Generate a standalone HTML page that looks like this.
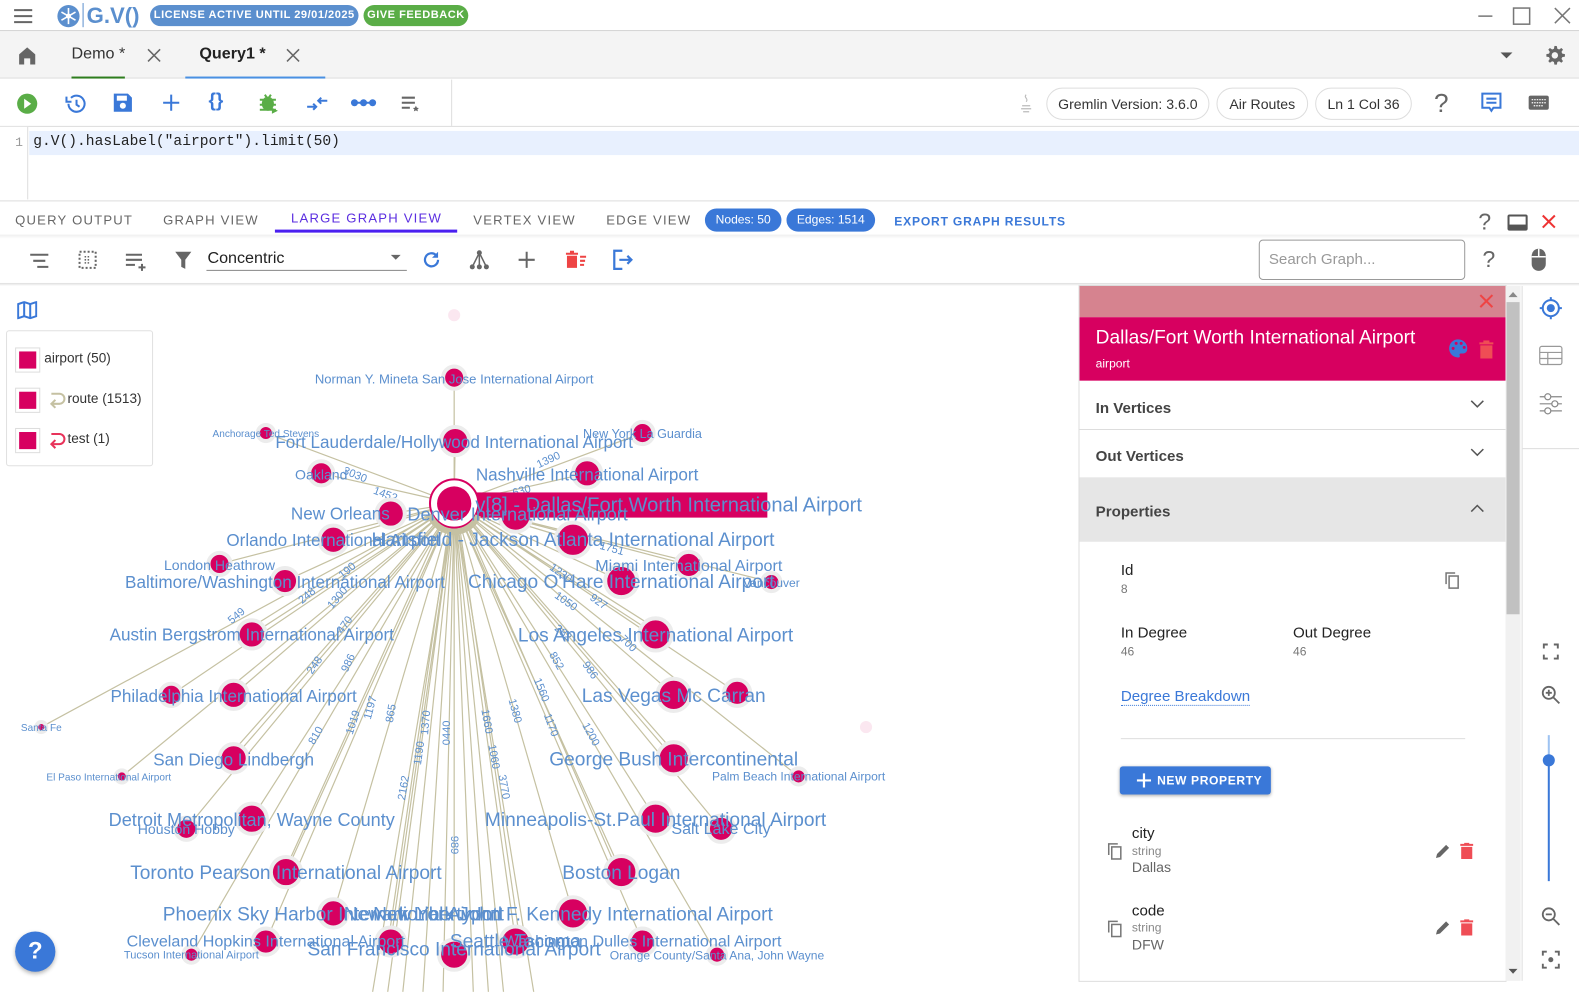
<!DOCTYPE html>
<html><head><meta charset="utf-8">
<style>
*{box-sizing:border-box;margin:0;padding:0}
body{width:1579px;height:985px;overflow:hidden;font-family:"Liberation Sans",sans-serif;background:#fff;position:relative;color:#333}
#w{position:absolute;left:0;top:0;width:1568px;height:978px;transform:scale(1.00702);transform-origin:0 0}
.abs{position:absolute}
.pill{position:absolute;border:1px solid #ddd;border-radius:16px;height:32px;top:87px;font-size:14px;line-height:30px;text-align:center;color:#333}
.tab{position:absolute;top:211px;font-size:13px;letter-spacing:1.2px;color:#666}
.ic{position:absolute}
</style></head><body><div id="w">
<!-- title bar -->
<div class="abs" style="left:0;top:0;width:1579px;height:31px;border-bottom:1px solid #ccc;background:#fff"></div>
<svg class="ic" style="left:12px;top:7px" width="22" height="18"><path d="M2 3h18M2 9h18M2 15h18" stroke="#666" stroke-width="2"/></svg>
<svg class="ic" style="left:56px;top:4px" width="24" height="24"><circle cx="12" cy="12" r="11" fill="#5b8fce"/><g stroke="#fff" stroke-width="1.6"><path d="M12 4v16M5 8l14 8M5 16l14-8"/></g><circle cx="12" cy="12" r="2.5" fill="#fff"/></svg>
<div class="abs" style="left:82px;top:3px;width:1px;height:24px;background:#5b8fce"></div>
<div class="abs" style="left:86px;top:3px;font-size:22px;font-weight:bold;color:#5b8fce">G.V()</div>
<div class="abs" style="left:149px;top:5px;width:207px;height:21px;border-radius:11px;background:#5b8fce;color:#fff;font-size:11px;font-weight:bold;letter-spacing:.5px;line-height:21px;text-align:center">LICENSE ACTIVE UNTIL 29/01/2025</div>
<div class="abs" style="left:361px;top:5px;width:104px;height:21px;border-radius:11px;background:#5aad47;color:#fff;font-size:11px;font-weight:bold;letter-spacing:.5px;line-height:21px;text-align:center">GIVE FEEDBACK</div>
<svg class="ic" style="left:1460px;top:5px" width="110" height="22"><path d="M8 11h14" stroke="#777" stroke-width="1.5"/><rect x="43" y="3" width="16" height="16" fill="none" stroke="#777" stroke-width="1.5"/><path d="M84 3l15 15M99 3l-15 15" stroke="#777" stroke-width="1.5"/></svg>
<!-- tabs bar -->
<div class="abs" style="left:0;top:31px;width:1579px;height:47px;background:#f4f4f4;border-bottom:1px solid #ddd"></div>
<svg class="ic" style="left:17px;top:45px" width="20" height="20"><path d="M2 9L10 2l8 7v10h-5v-6H7v6H2z" fill="#666"/></svg>
<div class="abs" style="left:71px;top:45px;font-size:16px;color:#333">Demo *</div>
<div class="abs" style="left:71px;top:76px;width:53px;height:2px;background:#2e7d1e"></div>
<svg class="ic" style="left:146px;top:48px" width="14" height="14"><path d="M1 1l12 12M13 1L1 13" stroke="#666" stroke-width="1.5"/></svg>
<div class="abs" style="left:198px;top:45px;font-size:16px;font-weight:bold;color:#222">Query1 *</div>
<div class="abs" style="left:184px;top:76px;width:139px;height:2px;background:#4a90e2"></div>
<svg class="ic" style="left:284px;top:48px" width="14" height="14"><path d="M1 1l12 12M13 1L1 13" stroke="#666" stroke-width="1.5"/></svg>
<svg class="ic" style="left:1490px;top:52px" width="12" height="8"><path d="M0 0h12L6 6z" fill="#555"/></svg>
<svg class="ic" style="left:1533px;top:44px" width="22" height="22"><path d="M11 1.5l2 .3.5 2.6 1.8.8 2.2-1.5 1.6 1.6-1.5 2.2.8 1.8 2.6.5v2.4l-2.6.5-.8 1.8 1.5 2.2-1.6 1.6-2.2-1.5-1.8.8-.5 2.6h-2.4l-.5-2.6-1.8-.8-2.2 1.5-1.6-1.6 1.5-2.2-.8-1.8-2.6-.5V9.8l2.6-.5.8-1.8-1.5-2.2 1.6-1.6 2.2 1.5 1.8-.8.5-2.6z" fill="#666"/><circle cx="11" cy="11" r="3.2" fill="#f4f4f4"/></svg>
<!-- toolbar -->
<div class="abs" style="left:0;top:125px;width:1579px;height:1px;background:#ddd"></div>
<div class="abs" style="left:448px;top:79px;width:1px;height:46px;background:#ddd"></div>
<svg class="ic" style="left:16px;top:92px" width="22" height="22"><circle cx="11" cy="11" r="10" fill="#5aad47"/><path d="M8 6l7 5-7 5z" fill="#fff"/></svg>
<svg class="ic" style="left:63px;top:91px" width="24" height="24"><path d="M5 12a8 8 0 1 0 2.5-5.8" fill="none" stroke="#3a78d8" stroke-width="2"/><path d="M3 5v5h5" fill="none" stroke="#3a78d8" stroke-width="2"/><path d="M13 8v5l3 2" fill="none" stroke="#3a78d8" stroke-width="2"/></svg>
<svg class="ic" style="left:112px;top:92px" width="20" height="20"><path d="M1 1h14l4 4v14H1z" fill="#3a78d8"/><rect x="4" y="3" width="10" height="5" fill="#fff"/><circle cx="10" cy="13" r="3" fill="#fff"/></svg>
<svg class="ic" style="left:160px;top:92px" width="20" height="20"><path d="M10 2v16M2 10h16" stroke="#3a78d8" stroke-width="2"/></svg>
<div class="abs" style="left:207px;top:90px;font-size:19px;color:#3a78d8;font-weight:bold">{}</div>
<svg class="ic" style="left:256px;top:92px" width="22" height="22"><ellipse cx="10" cy="11" rx="6" ry="7" fill="#5aad47"/><path d="M2 7h16M2 12h16M2 17h16M7 2l2 3M13 2l-2 3" stroke="#5aad47" stroke-width="2"/><path d="M14 15l6 3-6 3z" fill="#5aad47"/></svg>
<svg class="ic" style="left:304px;top:95px" width="22" height="16"><path d="M1 11h9M7 8l3 3-3 3M21 5h-9M15 2l-3 3 3 3" fill="none" stroke="#3a78d8" stroke-width="2"/></svg>
<svg class="ic" style="left:348px;top:96px" width="26" height="12"><path d="M3 6h20" stroke="#3a78d8" stroke-width="2"/><circle cx="4" cy="6" r="3.5" fill="#3a78d8"/><circle cx="13" cy="6" r="3.5" fill="#3a78d8"/><circle cx="22" cy="6" r="3.5" fill="#3a78d8"/></svg>
<svg class="ic" style="left:398px;top:95px" width="20" height="16"><path d="M1 2h13M1 7h13M1 12h8" stroke="#666" stroke-width="2"/><path d="M15 10l1 2 2 .2-1.5 1.4.5 2-2-1-2 1 .5-2-1.5-1.4 2-.2z" fill="#666"/></svg>
<svg class="ic" style="left:1011px;top:92px" width="16" height="22"><path d="M8 2c-3 3 3 4 0 7M4 13h8M3 16h10M5 19h6" stroke="#bbb" stroke-width="1.2" fill="none"/></svg>
<div class="pill" style="left:1039px;width:162px">Gremlin Version: 3.6.0</div>
<div class="pill" style="left:1208px;width:91px">Air Routes</div>
<div class="pill" style="left:1306px;width:96px">Ln 1 Col 36</div>
<div class="abs" style="left:1424px;top:87px;font-size:26px;color:#666">?</div>
<svg class="ic" style="left:1470px;top:91px" width="22" height="22"><path d="M2 2h18v14h-7l-2 3-2-3H2z" fill="none" stroke="#3a78d8" stroke-width="2"/><path d="M6 7h10M6 11h10" stroke="#3a78d8" stroke-width="2"/></svg>
<svg class="ic" style="left:1517px;top:94px" width="22" height="16"><rect x="1" y="1" width="20" height="14" rx="2" fill="#666"/><path d="M4 5h14M4 8h14M6 11h10" stroke="#fff" stroke-width="1.2" stroke-dasharray="1.5 1"/></svg>
<!-- editor -->
<div class="abs" style="left:0;top:126px;width:28px;height:72px;border-right:1px solid #ddd;background:#fff"></div>
<div class="abs" style="left:29px;top:130px;width:1540px;height:24px;background:#e8f0fe"></div>
<div class="abs" style="left:15px;top:134px;font-family:'Liberation Mono',monospace;font-size:13px;color:#999">1</div>
<div class="abs" style="left:33px;top:133px;font-family:'Liberation Mono',monospace;font-size:14.5px;color:#222">g.V().hasLabel("airport").limit(50)</div>
<div class="abs" style="left:0;top:199px;width:1579px;height:1px;background:#ddd"></div>
<!-- result tabs -->
<div class="tab" style="left:15px">QUERY OUTPUT</div>
<div class="tab" style="left:162px">GRAPH VIEW</div>
<div class="tab" style="left:289px;color:#5b2ee0;top:209px">LARGE GRAPH VIEW</div>
<div class="abs" style="left:273px;top:228px;width:181px;height:3px;background:#4a1ff0"></div>
<div class="tab" style="left:470px">VERTEX VIEW</div>
<div class="tab" style="left:602px">EDGE VIEW</div>
<div class="abs" style="left:700px;top:207px;width:76px;height:23px;border-radius:12px;background:#3a78d8;color:#fff;font-size:12px;line-height:23px;text-align:center">Nodes: 50</div>
<div class="abs" style="left:781px;top:207px;width:88px;height:23px;border-radius:12px;background:#3a78d8;color:#fff;font-size:12px;line-height:23px;text-align:center">Edges: 1514</div>
<div class="abs" style="left:888px;top:213px;font-size:12px;letter-spacing:.8px;color:#3a78d8;font-weight:bold">EXPORT GRAPH RESULTS</div>
<div class="abs" style="left:1468px;top:207px;font-size:23px;color:#666">?</div>
<svg class="ic" style="left:1496px;top:212px" width="22" height="18"><rect x="1" y="1" width="20" height="16" rx="2" fill="#555"/><rect x="3" y="3" width="16" height="8" fill="#fff"/></svg>
<svg class="ic" style="left:1530px;top:212px" width="16" height="16"><path d="M2 2l12 12M14 2L2 14" stroke="#e33" stroke-width="2"/></svg>
<div class="abs" style="left:0;top:233px;width:1579px;height:4px;background:linear-gradient(#eee,#fff)"></div>
<!-- graph toolbar -->
<svg class="ic" style="left:29px;top:250px" width="22" height="18"><path d="M1 3h18M4 9h12M8 15h11" stroke="#666" stroke-width="2"/></svg>
<svg class="ic" style="left:77px;top:248px" width="20" height="20"><rect x="2" y="2" width="16" height="16" fill="none" stroke="#666" stroke-width="2" stroke-dasharray="2 2"/><path d="M7 7h6M7 10h6M7 13h6" stroke="#666" stroke-width="1.5" stroke-dasharray="1.5 1.5"/></svg>
<svg class="ic" style="left:124px;top:250px" width="22" height="20"><path d="M1 3h16M1 8h16M1 13h9" stroke="#666" stroke-width="2"/><path d="M17 12v7M13.5 15.5h7" stroke="#666" stroke-width="2"/></svg>
<svg class="ic" style="left:173px;top:249px" width="18" height="20"><path d="M1 1h16l-6 8v9l-4-2V9z" fill="#666"/></svg>
<div class="abs" style="left:206px;top:248px;font-size:16px;color:#222">Concentric</div>
<div class="abs" style="left:205px;top:268px;width:199px;height:1px;background:#888"></div>
<svg class="ic" style="left:388px;top:253px" width="10" height="6"><path d="M0 0h10L5 5z" fill="#666"/></svg>
<svg class="ic" style="left:418px;top:247px" width="22" height="22"><path d="M17 11a6.5 6.5 0 1 1-2-4.7" fill="none" stroke="#3a78d8" stroke-width="2.2"/><path d="M17 3v6h-6z" fill="#3a78d8"/></svg>
<svg class="ic" style="left:465px;top:247px" width="22" height="22"><circle cx="11" cy="4" r="2.5" fill="#666"/><circle cx="4" cy="18" r="2.5" fill="#666"/><circle cx="11" cy="18" r="2.5" fill="#666"/><circle cx="18" cy="18" r="2.5" fill="#666"/><path d="M11 4L4 18M11 4v14M11 4l7 14" stroke="#666" stroke-width="1.5"/></svg>
<svg class="ic" style="left:513px;top:248px" width="20" height="20"><path d="M10 2v16M2 10h16" stroke="#666" stroke-width="2"/></svg>
<svg class="ic" style="left:560px;top:248px" width="24" height="20"><path d="M2 4h12M6 2h4" stroke="#e44" stroke-width="2"/><path d="M3 6h10v12H3z" fill="#e44"/><path d="M16 7h6M16 11h5M16 15h4" stroke="#e44" stroke-width="2"/></svg>
<svg class="ic" style="left:607px;top:247px" width="24" height="22"><path d="M11 2H3v18h8" fill="none" stroke="#3a78d8" stroke-width="2.2"/><path d="M8 11h12M16 7l4 4-4 4" fill="none" stroke="#3a78d8" stroke-width="2.2"/></svg>
<div class="abs" style="left:1250px;top:238px;width:205px;height:40px;border:1px solid #999;border-radius:4px;font-size:15px;color:#999;padding:10px 9px">Search Graph...</div>
<div class="abs" style="left:1472px;top:244px;font-size:23px;color:#666">?</div>
<svg class="ic" style="left:1519px;top:245px" width="18" height="26"><path d="M2 9a7 7 0 0 1 14 0v8a7 7 0 0 1-14 0z" fill="#666"/><path d="M2 10h14M9 2v8" stroke="#fff" stroke-width="1.5"/></svg>
<div class="abs" style="left:0;top:281px;width:1579px;height:3px;background:linear-gradient(#ddd,#fff)"></div>

<!-- graph -->
<svg class="abs" style="left:0;top:284px" width="1072" height="701" viewBox="0 284 1072 701">
<circle cx="451" cy="313" r="6" fill="#fbe7f0"/>
<circle cx="860" cy="722" r="6" fill="#fbe7f0"/>
<g stroke="#c5c1a2" stroke-width="1.2">
<path d="M451 500L451 375M451 500L264 430M451 500L452 438M451 500L638 430M451 500L319 470M451 500L583 470M451 500L388 510M451 500L512 512M451 500L331 536M451 500L569 536M451 500L218 560M451 500L684 561M451 500L283 577M451 500L617 577M451 500L766 578M451 500L250 630M451 500L651 630M451 500L170 690M451 500L232 690M451 500L669 690M451 500L732 688M451 500L41 722M451 500L232 753M451 500L669 753M451 500L121 771M451 500L793 771M451 500L250 813M451 500L185 823M451 500L651 813M451 500L716 823M451 500L284 866M451 500L617 866M451 500L331 907M451 500L569 907M451 500L388 935M451 500L264 935M451 500L512 935M451 500L638 935M451 500L451 948M451 500L190 948M451 500L712 948M451 500L370 985M451 500L385 985M451 500L420 985M451 500L440 985M451 500L470 985M451 500L500 985M451 500L530 985M451 500L400 985M451 500L485 985"/>
<path d="M446 500L243 627M456 500L656 627M448 500L284 862M454 500L612 862M449 500L386 932M453 500L516 932M445 505L228 750M457 505L672 750"/>
</g>
<g fill="#5b8fce" font-size="11">
<text x="340" y="470" transform="rotate(22 340 470)">3030</text><text x="370" y="490" transform="rotate(20 370 490)">1452</text>
<text x="535" y="465" transform="rotate(-25 535 465)">1390</text><text x="510" y="493" transform="rotate(-15 510 493)">630</text>
<text x="340" y="575" transform="rotate(-40 340 575)">190</text><text x="300" y="600" transform="rotate(-40 300 600)">248</text><text x="330" y="605" transform="rotate(-50 330 605)">1300</text>
<text x="230" y="620" transform="rotate(-40 230 620)">549</text><text x="340" y="630" transform="rotate(-55 340 630)">470</text>
<text x="310" y="670" transform="rotate(-55 310 670)">248</text><text x="345" y="668" transform="rotate(-65 345 668)">986</text>
<text x="312" y="740" transform="rotate(-60 312 740)">810</text><text x="350" y="730" transform="rotate(-72 350 730)">1019</text><text x="368" y="715" transform="rotate(-75 368 715)">1197</text>
<text x="390" y="718" transform="rotate(-80 390 718)">865</text><text x="418" y="760" transform="rotate(-82 418 760)">1190</text><text x="425" y="730" transform="rotate(-85 425 730)">1370</text>
<text x="447" y="740" transform="rotate(-90 447 740)">0440</text><text x="402" y="795" transform="rotate(-80 402 795)">2162</text><text x="448" y="830" transform="rotate(90 448 830)">989</text>
<text x="478" y="705" transform="rotate(80 478 705)">1660</text><text x="485" y="740" transform="rotate(80 485 740)">1060</text><text x="495" y="770" transform="rotate(80 495 770)">3770</text>
<text x="505" y="695" transform="rotate(75 505 695)">1380</text><text x="530" y="675" transform="rotate(68 530 675)">1560</text><text x="540" y="710" transform="rotate(70 540 710)">1170</text>
<text x="545" y="650" transform="rotate(60 545 650)">852</text><text x="578" y="660" transform="rotate(55 578 660)">986</text><text x="578" y="720" transform="rotate(62 578 720)">1200</text>
<text x="545" y="565" transform="rotate(35 545 565)">1230</text><text x="550" y="593" transform="rotate(35 550 593)">1050</text><text x="585" y="595" transform="rotate(35 585 595)">927</text>
<text x="550" y="625" transform="rotate(40 550 625)">282</text><text x="615" y="635" transform="rotate(45 615 635)">700</text><text x="595" y="545" transform="rotate(15 595 545)">1751</text>
</g>
<g fill="#d70060" stroke="#ececec" stroke-width="4">
<circle cx="451" cy="375" r="11"/><circle cx="264" cy="430" r="8"/><circle cx="452" cy="438" r="14"/><circle cx="638" cy="430" r="11"/>
<circle cx="319" cy="470" r="12"/><circle cx="583" cy="470" r="14"/><circle cx="388" cy="510" r="14"/><circle cx="512" cy="512" r="16"/>
<circle cx="331" cy="536" r="14"/><circle cx="569" cy="536" r="17"/><circle cx="218" cy="560" r="11"/><circle cx="684" cy="561" r="13"/>
<circle cx="283" cy="577" r="13"/><circle cx="617" cy="577" r="16"/><circle cx="766" cy="578" r="9"/><circle cx="250" cy="630" r="14"/>
<circle cx="651" cy="630" r="16"/><circle cx="170" cy="690" r="11"/><circle cx="232" cy="690" r="14"/><circle cx="669" cy="690" r="16"/>
<circle cx="732" cy="688" r="13"/><circle cx="41" cy="722" r="5"/><circle cx="232" cy="753" r="14"/><circle cx="669" cy="753" r="16"/>
<circle cx="121" cy="771" r="6"/><circle cx="793" cy="771" r="8"/><circle cx="250" cy="813" r="15"/><circle cx="185" cy="823" r="11"/>
<circle cx="651" cy="813" r="16"/><circle cx="716" cy="823" r="13"/><circle cx="284" cy="866" r="15"/><circle cx="617" cy="866" r="16"/>
<circle cx="331" cy="907" r="14"/><circle cx="569" cy="907" r="16"/><circle cx="388" cy="935" r="14"/><circle cx="264" cy="935" r="13"/>
<circle cx="512" cy="935" r="15"/><circle cx="638" cy="935" r="13"/><circle cx="451" cy="948" r="15"/><circle cx="190" cy="948" r="8"/><circle cx="712" cy="948" r="9"/>
</g>
<rect x="440" y="489" width="322" height="25" fill="#d70060"/>
<circle cx="451" cy="500" r="24" fill="#fff" stroke="#d70060" stroke-width="2"/>
<circle cx="451" cy="500" r="17" fill="#d70060"/>
<path d="M427 512a26 26 0 0 0 48 0" fill="none" stroke="#c5c1a2" stroke-width="6"/>
<g fill="#5b8fce" text-anchor="middle" font-family="Liberation Sans,sans-serif">
<text x="451" y="381" font-size="13">Norman Y. Mineta San Jose International Airport</text>
<text x="264" y="434" font-size="10">Anchorage Ted Stevens</text>
<text x="451" y="445" font-size="17">Fort Lauderdale/Hollywood International Airport</text>
<text x="638" y="435" font-size="12.5">New York La Guardia</text>
<text x="319" y="476" font-size="14">Oakland</text>
<text x="583" y="477" font-size="17">Nashville International Airport</text>
<text x="338" y="516" font-size="17">New Orleans</text>
<text x="514" y="517" font-size="18">Denver International Airport</text>
<text x="331" y="542" font-size="17">Orlando International Airport</text>
<text x="569" y="542" font-size="19">Hartsfield - Jackson Atlanta International Airport</text>
<text x="218" y="566" font-size="14">London Heathrow</text>
<text x="684" y="567" font-size="16">Miami International Airport</text>
<text x="283" y="584" font-size="17">Baltimore/Washington International Airport</text>
<text x="617" y="584" font-size="19">Chicago O'Hare International Airport</text>
<text x="766" y="583" font-size="12">Vancouver</text>
<text x="250" y="636" font-size="17">Austin Bergstrom International Airport</text>
<text x="651" y="637" font-size="19">Los Angeles International Airport</text>
<text x="232" y="697" font-size="17">Philadelphia International Airport</text>
<text x="669" y="697" font-size="19">Las Vegas Mc Carran</text>
<text x="41" y="726" font-size="10">Santa Fe</text>
<text x="232" y="760" font-size="17">San Diego Lindbergh</text>
<text x="669" y="760" font-size="19">George Bush Intercontinental</text>
<text x="108" y="775" font-size="10">El Paso International Airport</text>
<text x="793" y="775" font-size="12">Palm Beach International Airport</text>
<text x="250" y="820" font-size="18">Detroit Metropolitan, Wayne County</text>
<text x="185" y="828" font-size="14">Houston Hobby</text>
<text x="651" y="820" font-size="19">Minneapolis-St.Paul International Airport</text>
<text x="716" y="828" font-size="16">Salt Lake City</text>
<text x="284" y="873" font-size="19">Toronto Pearson International Airport</text>
<text x="617" y="873" font-size="19">Boston Logan</text>
<text x="331" y="914" font-size="19">Phoenix Sky Harbor International Airport</text>
<text x="569" y="914" font-size="19">New York John F. Kennedy International Airport</text>
<text x="420" y="914" font-size="19">Newark Liberty Intl</text>
<text x="264" y="940" font-size="16">Cleveland Hopkins International Airport</text>
<text x="512" y="941" font-size="19">Seattle Tacoma</text>
<text x="638" y="940" font-size="16">Washington Dulles International Airport</text>
<text x="451" y="949" font-size="19">San Francisco International Airport</text>
<text x="190" y="952" font-size="11">Tucson International Airport</text>
<text x="712" y="953" font-size="12">Orange County/Santa Ana, John Wayne</text>
</g>
<text x="472" y="508" font-size="20" fill="#5b8fce">v[8] - Dallas/Fort Worth International Airport</text>
</svg>

<!-- legend -->
<svg class="ic" style="left:17px;top:299px" width="20" height="18"><path d="M1 3l6-2 6 2 6-2v14l-6 2-6-2-6 2z" fill="none" stroke="#3a78d8" stroke-width="2"/><path d="M7 1v14M13 3v14" stroke="#3a78d8" stroke-width="2"/></svg>
<div class="abs" style="left:6px;top:328px;width:146px;height:135px;border:1px solid #e0e0e0;border-radius:3px;background:#fff;font-size:13.5px;color:#333">
 <div class="abs" style="left:8px;top:16px;width:25px;height:25px;border:1px solid #ddd;padding:3px"><div style="width:17px;height:17px;background:#d70060"></div></div>
 <div class="abs" style="left:37px;top:19px">airport (50)</div>
 <div class="abs" style="left:8px;top:56px;width:25px;height:25px;border:1px solid #ddd;padding:3px"><div style="width:17px;height:17px;background:#d70060"></div></div>
 <svg class="abs" style="left:40px;top:58px" width="20" height="20"><path d="M4 4h8a5 5 0 0 1 0 10H5M8 10l-4 4 4 4" fill="none" stroke="#c5c1a2" stroke-width="2"/></svg>
 <div class="abs" style="left:60px;top:59px">route (1513)</div>
 <div class="abs" style="left:8px;top:96px;width:25px;height:25px;border:1px solid #ddd;padding:3px"><div style="width:17px;height:17px;background:#d70060"></div></div>
 <svg class="abs" style="left:40px;top:98px" width="20" height="20"><path d="M4 4h8a5 5 0 0 1 0 10H5M8 10l-4 4 4 4" fill="none" stroke="#e8335a" stroke-width="2"/></svg>
 <div class="abs" style="left:60px;top:99px">test (1)</div>
</div>
<!-- help -->
<div class="abs" style="left:15px;top:925px;width:40px;height:40px;border-radius:50%;background:#3a78d8;color:#fff;font-size:24px;font-weight:bold;text-align:center;line-height:40px;box-shadow:0 2px 4px rgba(0,0,0,.3)">?</div>

<!-- right panel -->
<div class="abs" style="left:1071px;top:283px;width:425px;height:692px;border:1px solid #ddd;background:#fff"></div>
<div class="abs" style="left:1072px;top:284px;width:423px;height:31px;background:#d6838f"></div>
<svg class="ic" style="left:1469px;top:292px" width="14" height="14"><path d="M1 1l12 12M13 1L1 13" stroke="#e44" stroke-width="2"/></svg>
<div class="abs" style="left:1072px;top:315px;width:423px;height:63px;background:#d70060"></div>
<div class="abs" style="left:1088px;top:325px;font-size:19px;color:#fff">Dallas/Fort Worth International Airport</div>
<div class="abs" style="left:1088px;top:354px;font-size:12px;color:#fff">airport</div>
<svg class="ic" style="left:1438px;top:336px" width="20" height="20"><path d="M10 1a9 9 0 0 0 0 18c1.5 0 2-1 1.5-2s0-2 1.5-2h2a4 4 0 0 0 4-4A9 9 0 0 0 10 1z" fill="#3a78d8"/><circle cx="5" cy="10" r="1.5" fill="#d70060"/><circle cx="8" cy="5" r="1.5" fill="#d70060"/><circle cx="13" cy="5" r="1.5" fill="#d70060"/><circle cx="16" cy="9" r="1.5" fill="#d70060"/></svg>
<svg class="ic" style="left:1469px;top:338px" width="14" height="18"><path d="M0 3h14M4 1h6" stroke="#ef4d55" stroke-width="2"/><path d="M1 5h12v13H1z" fill="#ef4d55"/></svg>
<div class="abs" style="left:1088px;top:397px;font-size:15px;font-weight:bold;color:#444">In Vertices</div>
<svg class="ic" style="left:1460px;top:397px" width="14" height="9"><path d="M1 1l6 6 6-6" fill="none" stroke="#555" stroke-width="1.5"/></svg>
<div class="abs" style="left:1072px;top:426px;width:423px;height:1px;background:#ddd"></div>
<div class="abs" style="left:1088px;top:445px;font-size:15px;font-weight:bold;color:#444">Out Vertices</div>
<svg class="ic" style="left:1460px;top:445px" width="14" height="9"><path d="M1 1l6 6 6-6" fill="none" stroke="#555" stroke-width="1.5"/></svg>
<div class="abs" style="left:1072px;top:474px;width:423px;height:64px;background:#e6e6e6"></div>
<div class="abs" style="left:1088px;top:500px;font-size:15px;font-weight:bold;color:#444">Properties</div>
<svg class="ic" style="left:1460px;top:500px" width="14" height="9"><path d="M1 8l6-6 6 6" fill="none" stroke="#555" stroke-width="1.5"/></svg>
<div class="abs" style="left:1113px;top:558px;font-size:15px;color:#222">Id</div>
<div class="abs" style="left:1113px;top:578px;font-size:12px;color:#777">8</div>
<svg class="ic" style="left:1432px;top:567px" width="18" height="18"><path d="M4 13V2h9" fill="none" stroke="#777" stroke-width="1.5"/><rect x="7" y="5" width="9" height="12" fill="none" stroke="#777" stroke-width="1.5"/></svg>
<div class="abs" style="left:1113px;top:620px;font-size:15px;color:#222">In Degree</div>
<div class="abs" style="left:1113px;top:640px;font-size:12px;color:#777">46</div>
<div class="abs" style="left:1284px;top:620px;font-size:15px;color:#222">Out Degree</div>
<div class="abs" style="left:1284px;top:640px;font-size:12px;color:#777">46</div>
<div class="abs" style="left:1113px;top:683px;font-size:15px;color:#3a78d8;border-bottom:1px dotted #3a78d8;line-height:17px">Degree Breakdown</div>
<div class="abs" style="left:1113px;top:733px;width:342px;height:1px;background:#ddd"></div>
<div class="abs" style="left:1112px;top:761px;width:150px;height:28px;border-radius:3px;background:#3a78d8;color:#fff;font-size:12px;font-weight:bold;letter-spacing:.6px;line-height:28px;padding-left:37px;box-shadow:0 1px 3px rgba(0,0,0,.3)">NEW PROPERTY</div>
<svg class="ic" style="left:1128px;top:767px" width="16" height="16"><path d="M8 1v14M1 8h14" stroke="#fff" stroke-width="2.2"/></svg>
<svg class="ic" style="left:1097px;top:836px" width="18" height="18"><path d="M4 13V2h9" fill="none" stroke="#777" stroke-width="1.5"/><rect x="7" y="5" width="9" height="12" fill="none" stroke="#777" stroke-width="1.5"/></svg>
<div class="abs" style="left:1124px;top:819px;font-size:15px;color:#222">city</div>
<div class="abs" style="left:1124px;top:838px;font-size:12px;color:#888">string</div>
<div class="abs" style="left:1124px;top:853px;font-size:14px;color:#666">Dallas</div>
<svg class="ic" style="left:1425px;top:838px" width="15" height="15"><path d="M1 14l1-4 9-9 3 3-9 9z" fill="#666"/></svg>
<svg class="ic" style="left:1450px;top:837px" width="13" height="16"><path d="M0 2h13M4 0h5" stroke="#ef4d55" stroke-width="2"/><path d="M1 4h11v12H1z" fill="#ef4d55"/></svg>
<svg class="ic" style="left:1097px;top:913px" width="18" height="18"><path d="M4 13V2h9" fill="none" stroke="#777" stroke-width="1.5"/><rect x="7" y="5" width="9" height="12" fill="none" stroke="#777" stroke-width="1.5"/></svg>
<div class="abs" style="left:1124px;top:896px;font-size:15px;color:#222">code</div>
<div class="abs" style="left:1124px;top:914px;font-size:12px;color:#888">string</div>
<div class="abs" style="left:1124px;top:930px;font-size:14px;color:#666">DFW</div>
<svg class="ic" style="left:1425px;top:914px" width="15" height="15"><path d="M1 14l1-4 9-9 3 3-9 9z" fill="#666"/></svg>
<svg class="ic" style="left:1450px;top:913px" width="13" height="16"><path d="M0 2h13M4 0h5" stroke="#ef4d55" stroke-width="2"/><path d="M1 4h11v12H1z" fill="#ef4d55"/></svg>
<!-- scrollbar -->
<div class="abs" style="left:1495px;top:284px;width:15px;height:690px;background:#f1f1f1"></div>
<div class="abs" style="left:1496px;top:300px;width:13px;height:310px;background:#c1c1c1"></div>
<svg class="ic" style="left:1498px;top:290px" width="9" height="6"><path d="M0 5h9L4.5 0z" fill="#888"/></svg>
<svg class="ic" style="left:1498px;top:962px" width="9" height="6"><path d="M0 0h9L4.5 5z" fill="#555"/></svg>
<!-- right column -->
<div class="abs" style="left:1511px;top:284px;width:1px;height:690px;background:#ddd"></div>
<div class="abs" style="left:1512px;top:445px;width:67px;height:1px;background:#ddd"></div>
<svg class="ic" style="left:1528px;top:294px" width="24" height="24"><circle cx="12" cy="12" r="8" fill="none" stroke="#3a78d8" stroke-width="2"/><circle cx="12" cy="12" r="4" fill="#3a78d8"/><path d="M12 1v3M12 20v3M1 12h3M20 12h3" stroke="#3a78d8" stroke-width="2"/></svg>
<svg class="ic" style="left:1528px;top:343px" width="24" height="20"><rect x="1" y="1" width="22" height="18" rx="2" fill="none" stroke="#999" stroke-width="1.2"/><path d="M1 7h22M1 13h22M9 7v12" stroke="#999" stroke-width="1.2"/></svg>
<svg class="ic" style="left:1528px;top:390px" width="24" height="22"><path d="M1 4h22M1 11h22M1 18h22" stroke="#888" stroke-width="1.2"/><circle cx="9" cy="4" r="3" fill="#fff" stroke="#888" stroke-width="1.2"/><circle cx="16" cy="11" r="3" fill="#fff" stroke="#888" stroke-width="1.2"/><circle cx="9" cy="18" r="3" fill="#fff" stroke="#888" stroke-width="1.2"/></svg>
<svg class="ic" style="left:1532px;top:639px" width="16" height="16"><path d="M1 5V1h4M11 1h4v4M15 11v4h-4M5 15H1v-4" fill="none" stroke="#666" stroke-width="2"/></svg>
<svg class="ic" style="left:1530px;top:680px" width="20" height="20"><circle cx="8" cy="8" r="6" fill="none" stroke="#666" stroke-width="1.8"/><path d="M12.5 12.5l6 6M8 5v6M5 8h6" stroke="#666" stroke-width="1.8"/></svg>
<div class="abs" style="left:1537px;top:730px;width:2px;height:25px;background:#9ec3f2"></div>
<div class="abs" style="left:1537px;top:755px;width:2px;height:120px;background:#3a78d8"></div>
<div class="abs" style="left:1532px;top:749px;width:12px;height:12px;border-radius:50%;background:#3a78d8"></div>
<svg class="ic" style="left:1530px;top:900px" width="20" height="20"><circle cx="8" cy="8" r="6" fill="none" stroke="#666" stroke-width="1.8"/><path d="M12.5 12.5l6 6M5 8h6" stroke="#666" stroke-width="1.8"/></svg>
<svg class="ic" style="left:1531px;top:944px" width="18" height="18"><path d="M1 5V1h4M13 1h4v4M17 13v4h-4M5 17H1v-4" fill="none" stroke="#666" stroke-width="2"/><circle cx="9" cy="9" r="2.5" fill="#666"/></svg>
</div></body></html>
